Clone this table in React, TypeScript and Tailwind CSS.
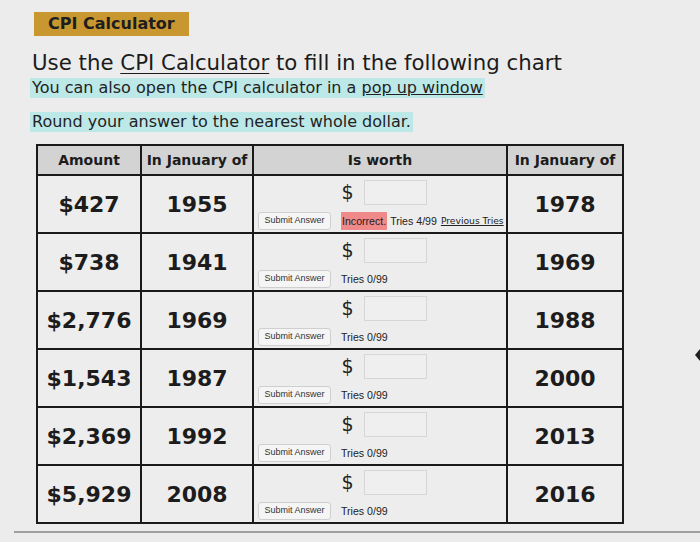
import React from "react";

const rows = [
  { amt: "$427", y1: "1955", y2: "1978", bad: true },
  { amt: "$738", y1: "1941", y2: "1969", bad: false },
  { amt: "$2,776", y1: "1969", y2: "1988", bad: false },
  { amt: "$1,543", y1: "1987", y2: "2000", bad: false },
  { amt: "$2,369", y1: "1992", y2: "2013", bad: false },
  { amt: "$5,929", y1: "2008", y2: "2016", bad: false },
];

function WorthCell({ bad }: { bad: boolean }) {
  return (
    <div className="flex flex-col h-[56px] pl-[4px] pt-[4px] whitespace-nowrap overflow-hidden">
      <div className="flex items-center justify-center gap-[10px] pl-[4px]">
        <span className="text-[19px] leading-none text-[#222]">$</span>
        <div className="w-[63px] h-[25px] border border-[#d6d6d6] bg-[#efefef]" />
      </div>
      <div className="flex items-center mt-[7px]">
        <div className="h-[18px] w-[73px] flex items-center justify-center rounded-[3px] border border-[#cfcfcf] bg-[#f5f5f5] text-[9px] text-[#333] font-['Liberation_Sans',Arial,sans-serif]">
          Submit Answer
        </div>
        <div className="ml-[10px] flex items-center text-[10.6px] leading-[12px] text-[#222] font-['Liberation_Sans',Arial,sans-serif]">
          {bad && (
            <span className="bg-[#f08a8a] px-[1px] py-[3px] mr-[3px]">Incorrect.</span>
          )}
          <span>{bad ? "Tries 4/99" : "Tries 0/99"}</span>
          {bad && (
            <span className="ml-[4px] underline text-[9.2px] font-['DejaVu_Sans',Verdana,sans-serif]">
              Previous Tries
            </span>
          )}
        </div>
      </div>
    </div>
  );
}

export default function App() {
  return (
    <div className="relative w-[700px] h-[542px] overflow-hidden bg-[#ececec] font-['DejaVu_Sans',Verdana,sans-serif] text-[#1c1c1c]">
      <div className="pl-[34px] pt-[12px]">
        <div className="inline-flex items-center h-[24px] px-[14px] bg-[#c9972f] text-[16px] font-bold text-[#1e1e1e]">
          CPI Calculator
        </div>
      </div>
      <div className="pl-[32px] mt-[14px] text-[21.3px] leading-[26px] whitespace-nowrap">
        Use the <span className="underline underline-offset-[3px] decoration-1">CPI Calculator</span> to fill in the following chart
      </div>
      <div className="pl-[30px]">
        <span className="inline-block bg-[#bde8e8] px-[2px] text-[16px] leading-[20px] text-[#222] whitespace-nowrap">
          You can also open the CPI calculator in a <span className="underline">pop up window</span>
        </span>
      </div>
      <div className="pl-[30px] mt-[10px]">
        <span className="inline-block bg-[#bde8e8] px-[2px] text-[16px] leading-[20px] text-[#222] whitespace-nowrap">
          Round your answer to the nearest whole dollar.
        </span>
      </div>
      <div className="pl-[36px] mt-[10px]">
        <table className="border-collapse table-fixed w-[586px]">
          <colgroup>
            <col className="w-[104px]" />
            <col className="w-[112px]" />
            <col className="w-[254px]" />
            <col className="w-[116px]" />
          </colgroup>
          <thead>
            <tr className="h-[30px] bg-[#d3d3d3] text-[14px] font-bold">
              <th className="border-2 border-[#1a1a1a]">Amount</th>
              <th className="border-2 border-[#1a1a1a] whitespace-nowrap">In January of</th>
              <th className="border-2 border-[#1a1a1a]">Is worth</th>
              <th className="border-2 border-[#1a1a1a] whitespace-nowrap">In January of</th>
            </tr>
          </thead>
          <tbody>
            {rows.map((r, i) => (
              <tr key={i} className="h-[58px] bg-[#ededed]">
                <td className="border-2 border-[#1a1a1a] text-center text-[22px] font-bold">{r.amt}</td>
                <td className="border-2 border-[#1a1a1a] text-center text-[22px] font-bold">{r.y1}</td>
                <td className="border-2 border-[#1a1a1a] p-0 align-top">
                  <WorthCell bad={r.bad} />
                </td>
                <td className="border-2 border-[#1a1a1a] text-center text-[22px] font-bold">{r.y2}</td>
              </tr>
            ))}
          </tbody>
        </table>
      </div>
      <div className="mt-[7px] ml-[14px] h-[2px] bg-[#a0a0a0]" />
      <div className="absolute right-0 top-[349px] w-0 h-0 border-y-[6px] border-y-transparent border-r-[5px] border-r-[#222]" />
    </div>
  );
}
